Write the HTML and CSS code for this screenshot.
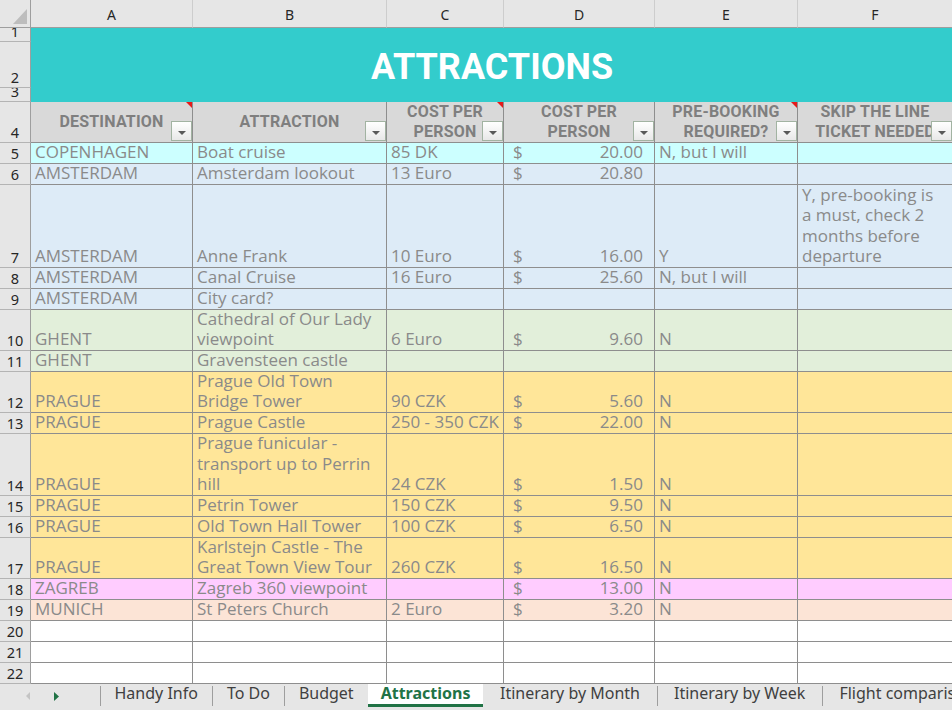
FILE: index.html
```html
<!DOCTYPE html>
<html lang="en">
<head>
    <meta charset="UTF-8">
    <meta name="viewport" content="width=device-width, initial-scale=1.0">
    <title>Attractions</title>
    <link rel="stylesheet" href="styles.css">
</head>
<body>
    <div class="workbook">
        <div class="sheet">
            <!-- Column letters -->
            <div class="corner">
                <svg width="31" height="28" viewBox="0 0 31 28"><polygon points="27,9 27,24 13,24" fill="#bdbdbd"/></svg>
            </div>
            <div class="colhead">A</div>
            <div class="colhead">B</div>
            <div class="colhead">C</div>
            <div class="colhead">D</div>
            <div class="colhead">E</div>
            <div class="colhead">F</div>

            <!-- Title block, rows 1-3 merged -->
            <div class="rh short">1</div>
            <div class="title">ATTRACTIONS</div>
            <div class="rh tall">2</div>
            <div class="rh short">3</div>

            <!-- Table headers -->
            <div class="row head">
                <div class="rh">4</div>
                <div class="hd note">DESTINATION<span class="filter"></span></div>
                <div class="hd">ATTRACTION<span class="filter"></span></div>
                <div class="hd note">COST PER<br>PERSON<span class="filter"></span></div>
                <div class="hd">COST PER<br>PERSON<span class="filter"></span></div>
                <div class="hd note">PRE-BOOKING<br>REQUIRED?<span class="filter"></span></div>
                <div class="hd">SKIP THE LINE<br>TICKET NEEDED<span class="filter"></span></div>
            </div>

            <div class="row cyan">
                <div class="rh">5</div>
                <div class="c">COPENHAGEN</div>
                <div class="c">Boat cruise</div>
                <div class="c">85 DK</div>
                <div class="c num"><span>$</span><span>20.00</span></div>
                <div class="c">N, but I will</div>
                <div class="c"></div>
            </div>
            <div class="row blue">
                <div class="rh">6</div>
                <div class="c">AMSTERDAM</div>
                <div class="c">Amsterdam lookout</div>
                <div class="c">13 Euro</div>
                <div class="c num"><span>$</span><span>20.80</span></div>
                <div class="c"></div>
                <div class="c"></div>
            </div>
            <div class="row blue l4">
                <div class="rh">7</div>
                <div class="c">AMSTERDAM</div>
                <div class="c">Anne Frank</div>
                <div class="c">10 Euro</div>
                <div class="c num"><span>$</span><span>16.00</span></div>
                <div class="c">Y</div>
                <div class="c">Y, pre-booking is<br>a must, check 2<br>months before<br>departure</div>
            </div>
            <div class="row blue">
                <div class="rh">8</div>
                <div class="c">AMSTERDAM</div>
                <div class="c">Canal Cruise</div>
                <div class="c">16 Euro</div>
                <div class="c num"><span>$</span><span>25.60</span></div>
                <div class="c">N, but I will</div>
                <div class="c"></div>
            </div>
            <div class="row blue">
                <div class="rh">9</div>
                <div class="c">AMSTERDAM</div>
                <div class="c">City card?</div>
                <div class="c"></div>
                <div class="c"></div>
                <div class="c"></div>
                <div class="c"></div>
            </div>
            <div class="row green l2">
                <div class="rh">10</div>
                <div class="c">GHENT</div>
                <div class="c">Cathedral of Our Lady<br>viewpoint</div>
                <div class="c">6 Euro</div>
                <div class="c num"><span>$</span><span>9.60</span></div>
                <div class="c">N</div>
                <div class="c"></div>
            </div>
            <div class="row green">
                <div class="rh">11</div>
                <div class="c">GHENT</div>
                <div class="c">Gravensteen castle</div>
                <div class="c"></div>
                <div class="c"></div>
                <div class="c"></div>
                <div class="c"></div>
            </div>
            <div class="row yellow l2">
                <div class="rh">12</div>
                <div class="c">PRAGUE</div>
                <div class="c">Prague Old Town<br>Bridge Tower</div>
                <div class="c">90 CZK</div>
                <div class="c num"><span>$</span><span>5.60</span></div>
                <div class="c">N</div>
                <div class="c"></div>
            </div>
            <div class="row yellow">
                <div class="rh">13</div>
                <div class="c">PRAGUE</div>
                <div class="c">Prague Castle</div>
                <div class="c">250 - 350 CZK</div>
                <div class="c num"><span>$</span><span>22.00</span></div>
                <div class="c">N</div>
                <div class="c"></div>
            </div>
            <div class="row yellow l3">
                <div class="rh">14</div>
                <div class="c">PRAGUE</div>
                <div class="c">Prague funicular -<br>transport up to Perrin<br>hill</div>
                <div class="c">24 CZK</div>
                <div class="c num"><span>$</span><span>1.50</span></div>
                <div class="c">N</div>
                <div class="c"></div>
            </div>
            <div class="row yellow">
                <div class="rh">15</div>
                <div class="c">PRAGUE</div>
                <div class="c">Petrin Tower</div>
                <div class="c">150 CZK</div>
                <div class="c num"><span>$</span><span>9.50</span></div>
                <div class="c">N</div>
                <div class="c"></div>
            </div>
            <div class="row yellow">
                <div class="rh">16</div>
                <div class="c">PRAGUE</div>
                <div class="c">Old Town Hall Tower</div>
                <div class="c">100 CZK</div>
                <div class="c num"><span>$</span><span>6.50</span></div>
                <div class="c">N</div>
                <div class="c"></div>
            </div>
            <div class="row yellow l2">
                <div class="rh">17</div>
                <div class="c">PRAGUE</div>
                <div class="c">Karlstejn Castle - The<br>Great Town View Tour</div>
                <div class="c">260 CZK</div>
                <div class="c num"><span>$</span><span>16.50</span></div>
                <div class="c">N</div>
                <div class="c"></div>
            </div>
            <div class="row pink">
                <div class="rh">18</div>
                <div class="c">ZAGREB</div>
                <div class="c">Zagreb 360 viewpoint</div>
                <div class="c"></div>
                <div class="c num"><span>$</span><span>13.00</span></div>
                <div class="c">N</div>
                <div class="c"></div>
            </div>
            <div class="row peach">
                <div class="rh">19</div>
                <div class="c">MUNICH</div>
                <div class="c">St Peters Church</div>
                <div class="c">2 Euro</div>
                <div class="c num"><span>$</span><span>3.20</span></div>
                <div class="c">N</div>
                <div class="c"></div>
            </div>
            <div class="row">
                <div class="rh">20</div>
                <div class="c"></div><div class="c"></div><div class="c"></div>
                <div class="c"></div><div class="c"></div><div class="c"></div>
            </div>
            <div class="row">
                <div class="rh">21</div>
                <div class="c"></div><div class="c"></div><div class="c"></div>
                <div class="c"></div><div class="c"></div><div class="c"></div>
            </div>
            <div class="row">
                <div class="rh">22</div>
                <div class="c"></div><div class="c"></div><div class="c"></div>
                <div class="c"></div><div class="c"></div><div class="c"></div>
            </div>
        </div>

        <!-- Sheet tabs -->
        <div class="tabs">
            <div class="nav">
                <svg width="100" height="26" viewBox="0 0 100 26">
                    <polygon points="30,8 30,16 26,12" fill="#c4c4c4"/>
                    <polygon points="54,8 54,17 59,12.5" fill="#217346"/>
                </svg>
            </div>
            <div class="tab">Handy Info</div>
            <div class="tab">To Do</div>
            <div class="tab">Budget</div>
            <div class="tab active">Attractions</div>
            <div class="tab">Itinerary by Month</div>
            <div class="tab">Itinerary by Week</div>
            <div class="tab">Flight comparison</div>
        </div>
    </div>
</body>
</html>
```

FILE: styles.css
```css
/* Global */
* {
    box-sizing: border-box;
}

body {
    margin: 0;
    background: #fff;
    overflow: hidden;
}

.workbook {
    width: 952px;
    height: 710px;
    display: flex;
    flex-direction: column;
    overflow: hidden;
}

/* Sheet grid */
.sheet {
    flex: 1;
    display: grid;
    grid-template-columns: 31px 162px 194px 117px 151px 143px 155px;
    align-content: start;
    overflow: hidden;
}

.row {
    display: contents;
}

.row > * {
    height: 21px;
}

.row.head > * {
    height: 41px;
}

.row.l2 > * {
    height: 41px;
}

.row.l3 > * {
    height: 62px;
}

.row.l4 > * {
    height: 83px;
}

/* Column letters */
.corner,
.colhead {
    height: 28px;
    background: #e6e6e6;
    border-bottom: 1px solid #9e9e9e;
}

.corner {
    border-right: 1px solid #9e9e9e;
}

.corner svg {
    display: block;
}

.colhead {
    border-right: 1px solid #cdcdcd;
    display: flex;
    justify-content: center;
    align-items: center;
    padding-top: 2px;
    font-family: "Noto Sans", sans-serif;
    font-size: 14px;
    color: #262626;
}

/* Row numbers */
.rh {
    grid-column: 1;
    background: #e6e6e6;
    border-right: 1px solid #9e9e9e;
    border-bottom: 1px solid #b4b4b4;
    display: flex;
    justify-content: center;
    align-items: flex-end;
    overflow: hidden;
    font-family: "Noto Sans", sans-serif;
    font-size: 14.5px;
    line-height: 19px;
    color: #262626;
}

.rh.short {
    height: 14px;
}

.rh.tall {
    height: 46px;
}

/* Title */
.title {
    grid-column: 2 / span 6;
    grid-row: span 3;
    background: #33cccc;
    display: flex;
    justify-content: center;
    align-items: center;
    padding-top: 4px;
    font-family: Roboto, sans-serif;
    font-weight: bold;
    font-size: 36px;
    color: #fff;
}

/* Header cells */
.hd {
    position: relative;
    background: #d9d9d9;
    border-right: 1px solid #8e8e8e;
    border-bottom: 1px solid #8e8e8e;
    display: flex;
    justify-content: center;
    align-items: center;
    text-align: center;
    font-family: Roboto, sans-serif;
    font-weight: bold;
    font-size: 16px;
    line-height: 20px;
    letter-spacing: 0.2px;
    color: #7f7f7f;
    white-space: nowrap;
}

.hd.note::before {
    content: '';
    position: absolute;
    top: 0;
    right: 0;
    border-top: 6px solid #e41b1b;
    border-left: 6px solid transparent;
}

.filter {
    position: absolute;
    right: 0;
    bottom: 1px;
    width: 21px;
    height: 20px;
    border: 1px solid #a2b3a2;
    background: linear-gradient(#ffffff, #e8e8e8);
}

.filter::after {
    content: '';
    position: absolute;
    left: 6px;
    top: 9px;
    border-top: 4px solid #595959;
    border-left: 4px solid transparent;
    border-right: 4px solid transparent;
}

/* Data cells */
.c {
    border-right: 1px solid #8e8e8e;
    border-bottom: 1px solid #8e8e8e;
    padding: 0 4px;
    display: flex;
    align-items: flex-end;
    white-space: nowrap;
    overflow: hidden;
    font-family: "Open Sans", sans-serif;
    font-size: 17px;
    line-height: 20.6px;
    color: #8a8a8a;
}

.c.num {
    justify-content: space-between;
    padding: 0 11px 0 9px;
}

.cyan > .c { background: #ccffff; }
.blue > .c { background: #ddebf7; }
.green > .c { background: #e2efda; }
.yellow > .c { background: #ffe699; }
.pink > .c { background: #ffccff; }
.peach > .c { background: #fce4d6; }

/* Sheet tabs */
.tabs {
    flex: none;
    height: 26px;
    background: #e6e6e6;
    display: flex;
    align-items: flex-start;
    white-space: nowrap;
    font-family: "Noto Sans", sans-serif;
    font-size: 16px;
    line-height: 18px;
    color: #404040;
}

.nav {
    width: 100px;
    flex: none;
}

.nav svg {
    display: block;
}

.tab {
    position: relative;
    height: 23px;
    padding: 0 14.5px;
}

.tab::before {
    content: '';
    position: absolute;
    left: 0;
    top: 2px;
    height: 20px;
    border-left: 1px solid #9e9e9e;
}

.tab.active {
    background: #fff;
    border-bottom: 3px solid #217346;
    font-weight: bold;
    color: #217346;
    padding: 0 12.5px;
}

.tab.active ~ .tab {
    padding: 0 17px;
}

.tab.active::before,
.tab.active + .tab::before {
    display: none;
}
```
